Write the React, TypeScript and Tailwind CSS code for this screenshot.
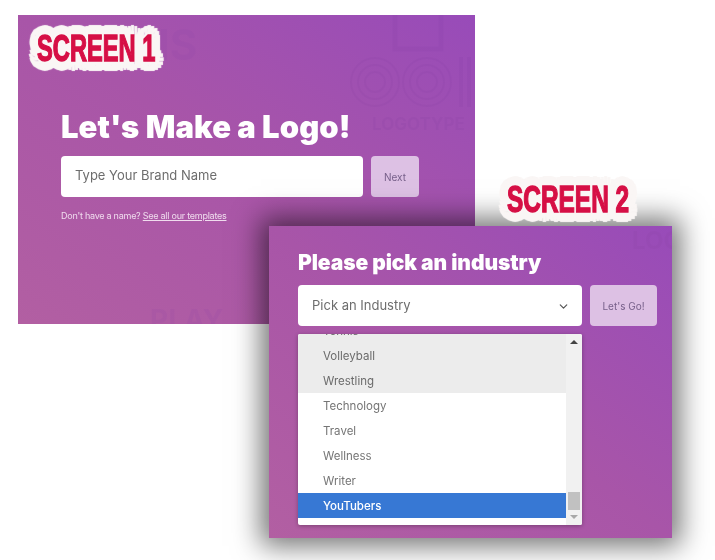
import { ChevronDown } from "lucide-react";

const rows = [
  { name: "Tennis", cls: "bg-[#ececec] text-[#6b6b6b] -mt-[16px]" },
  { name: "Volleyball", cls: "bg-[#ececec] text-[#6b6b6b]" },
  { name: "Wrestling", cls: "bg-[#ececec] text-[#6b6b6b]" },
  { name: "Technology", cls: "bg-white text-[#757575]" },
  { name: "Travel", cls: "bg-white text-[#757575]" },
  { name: "Wellness", cls: "bg-white text-[#757575]" },
  { name: "Writer", cls: "bg-white text-[#757575]" },
  { name: "YouTubers", cls: "bg-[#3778d4] text-white font-medium" },
];

function Sticker({ label, className }: { label: string; className: string }) {
  return (
    <div
      className={`absolute z-30 origin-left font-['Liberation_Sans',sans-serif] font-bold text-[37px] leading-none text-[#d60f45] whitespace-nowrap [-webkit-text-stroke:1.4px_#d60f45] [text-shadow:14px_0_1px_#faf6f5,-14px_0_1px_#faf6f5,0_10px_1px_#faf6f5,0_-10px_1px_#faf6f5,10px_7px_1px_#faf6f5,-10px_7px_1px_#faf6f5,10px_-7px_1px_#faf6f5,-10px_-7px_1px_#faf6f5,5px_9px_1px_#faf6f5,-5px_9px_1px_#faf6f5,5px_-9px_1px_#faf6f5,-5px_-9px_1px_#faf6f5,13px_4px_1px_#faf6f5,-13px_4px_1px_#faf6f5,13px_-4px_1px_#faf6f5,-13px_-4px_1px_#faf6f5,6px_0_1px_#faf6f5,-6px_0_1px_#faf6f5,0_4px_1px_#faf6f5,0_-4px_1px_#faf6f5] ${className}`}
    >
      {label}
    </div>
  );
}

export default function App() {
  return (
    <div className="relative w-[715px] h-[560px] bg-white overflow-hidden font-['Inter',sans-serif] blur-[0.3px]">
      {/* screen 1 */}
      <div className="absolute left-[18px] top-[15px] w-[457px] h-[309px] bg-gradient-to-tr from-[#b25fa2] via-[#a855a8] to-[#984bb9] overflow-hidden pl-[43px] pt-[93px]">
        <div className="absolute left-[354px] top-[97px] text-[#8f45a8] opacity-25 text-[17px] font-bold">LOGOTYPE</div>
        <div className="absolute left-[140px] top-[-2px] text-[#8f45a8] opacity-15 text-[42px] font-bold">IS</div>
        <div className="absolute left-[132px] top-[284px] text-[#8f45a8] opacity-15 text-[28px] font-bold">PLAY</div>
        <svg className="absolute left-[315px] top-[0px] opacity-[0.07]" width="142" height="100" viewBox="0 0 142 100" fill="none" stroke="#6d2f92" strokeWidth="2">
          <circle cx="42" cy="67" r="24" />
          <circle cx="42" cy="67" r="17" />
          <circle cx="42" cy="67" r="10" />
          <circle cx="94" cy="67" r="24" />
          <circle cx="94" cy="67" r="17" />
          <circle cx="94" cy="67" r="10" />
          <path d="M62 0v34h46V0" strokeWidth="5" />
          <path d="M128 42v50M136 42v50" strokeWidth="4" />
        </svg>
        <h1 className="relative text-[31px] leading-[38px] font-black text-white tracking-[0.08px] whitespace-nowrap">Let's Make a Logo!</h1>
        <div className="relative flex gap-2 mt-[10px]">
          <div className="w-[302px] h-[41px] bg-white rounded flex items-center pl-[14px] pb-[1px] text-[13px] text-[#6d6d6d]">Type Your Brand Name</div>
          <div className="w-[48px] h-[41px] bg-[#ddc1e4] rounded flex items-center justify-center pt-[2px] text-[10px] text-[#77608a]">Next</div>
        </div>
        <p className="relative mt-[13px] text-[9px] leading-[12px] tracking-[-0.25px] text-[#f0dcee]">
          Don't have a name? <span className="underline">See all our templates</span>
        </p>
      </div>
      <Sticker label="SCREEN 1" className="left-[37px] top-[30px] scale-x-[.64]" />

      {/* screen 2 */}
      <div className="absolute z-10 left-[269px] top-[226px] w-[403px] h-[312px] bg-gradient-to-tr from-[#b25fa2] via-[#a855a8] to-[#984bb9] shadow-[0_0_26px_8px_rgba(0,0,0,0.55)] overflow-hidden pl-[29px] pt-[23px]">
        <div className="absolute left-[363px] top-[-3px] text-[#8f45a8] opacity-20 text-[24px] font-bold">LOG</div>
        <h2 className="relative text-[21px] leading-[28px] font-black text-white tracking-[-0.08px] whitespace-nowrap">Please pick an industry</h2>
        <div className="relative flex gap-2 mt-[8px]">
          <div className="w-[284px] h-[41px] bg-white rounded flex items-center justify-between pl-[14px] pr-[12px] text-[13px] text-[#6d6d6d]">
            <span>Pick an Industry</span>
            <ChevronDown size={13} strokeWidth={2.2} className="text-[#555] mt-[2px]" />
          </div>
          <div className="w-[67px] h-[41px] bg-[#ddc1e4] rounded flex items-center justify-center pt-[2px] text-[10px] text-[#77608a]">Let's Go!</div>
        </div>
        <div className="relative mt-[8px] w-[284px] h-[191px] flex bg-white rounded-[2px] overflow-hidden shadow-[0_1px_4px_rgba(0,0,0,0.3)]">
          <div className="w-[268px] h-full overflow-hidden">
            {rows.map((r) => (
              <div key={r.name} className={`h-[25px] pl-[25px] pt-[3px] flex items-center text-[11.5px] ${r.cls}`}>
                {r.name}
              </div>
            ))}
          </div>
          <div className="w-[16px] h-full bg-[#f1f1f1] flex flex-col items-center">
            <div className="mt-[6px] w-0 h-0 border-x-[4px] border-x-transparent border-b-[4px] border-b-[#444]" />
            <div className="mt-[148px] w-[12px] h-[18px] bg-[#c1c1c1]" />
            <div className="mt-[5px] w-0 h-0 border-x-[4px] border-x-transparent border-t-[4px] border-t-[#a8a8a8]" />
          </div>
        </div>
      </div>
      <Sticker label="SCREEN 2" className="left-[507px] top-[181px] scale-x-[.66]" />
    </div>
  );
}
